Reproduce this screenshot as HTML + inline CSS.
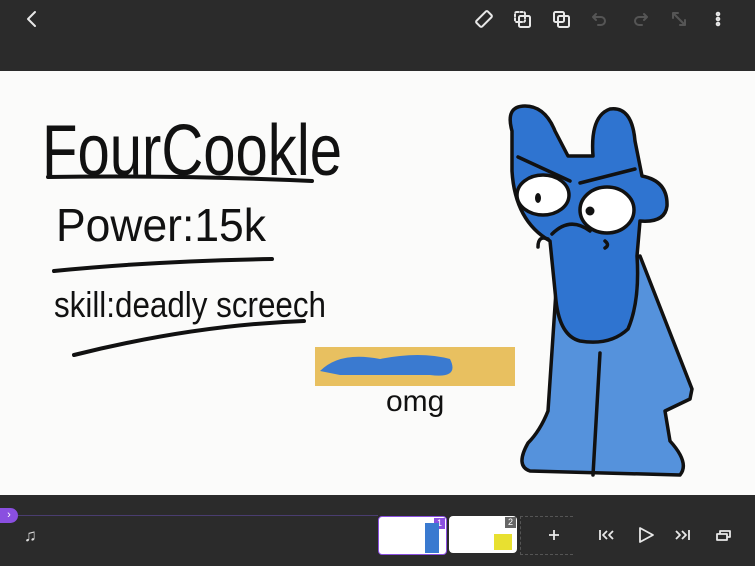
<!DOCTYPE html><html><head><style>
body{margin:0;width:755px;height:566px;background:#2b2b2b;overflow:hidden;font-family:"Liberation Sans",sans-serif;position:relative}
.top{position:absolute;top:0;left:0;width:755px;height:71px;background:#2b2b2b}
.canvas{position:absolute;top:71px;left:0;width:755px;height:424px;background:#fbfbfa}
svg{position:absolute}
</style></head><body>
<div class="top"></div>
<svg style="left:0;top:0" width="755" height="40" fill="none" stroke="#e8e8e8" stroke-width="2" stroke-linecap="round" stroke-linejoin="round">
<path d="M35 12l-7 7 7 7"/>
<rect x="476" y="15" width="16" height="8" rx="1.5" transform="rotate(-45 484 19)"/>
<rect x="515" y="12" width="10" height="10" rx="1.5" stroke-dasharray="2 2"/><rect x="519" y="16" width="11" height="11" rx="1.5"/>
<rect x="554" y="12" width="10" height="10" rx="1.5"/><rect x="558" y="16" width="11" height="11" rx="1.5"/>
<g stroke="#555"><path d="M596 14l-3 3 3 3M593 17h8a4 4 0 010 8h-3"/><path d="M644 14l3 3-3 3M647 17h-8a4 4 0 000 8h3"/><path d="M673 13l12 12M673 13v5M673 13h5M685 25h-5M685 25v-5"/></g>
<circle cx="718" cy="14" r="1.3"/><circle cx="718" cy="19" r="1.3"/><circle cx="718" cy="24" r="1.3"/>
</svg>
<div class="canvas"></div>
<svg style="left:0;top:71px" width="755" height="424">
<g font-family="Liberation Sans" fill="#111">
<text x="42" y="104" font-size="72" textLength="300" lengthAdjust="spacingAndGlyphs">FourCookle</text>
<text x="56" y="170" font-size="46" textLength="210" lengthAdjust="spacingAndGlyphs">Power:15k</text>
<text x="54" y="246" font-size="36" textLength="272" lengthAdjust="spacingAndGlyphs">skill:deadly screech</text>
<text x="386" y="340" font-size="30">omg</text>
</g>
<g stroke="#111" stroke-width="4" fill="none" stroke-linecap="round">
<path d="M48 106q130-2 264 4"/><path d="M54 200q100-10 218-12"/><path d="M74 284q120-30 230-34"/>
</g>
<rect x="315" y="276" width="200" height="39" fill="#e8c060"/>
<path d="M320 300q20-20 60-12q40-8 70 0q10 20-20 16h-90z" fill="#3a7ad0"/>
<g stroke="#111" stroke-width="3.5" stroke-linejoin="round" stroke-linecap="round">
<path d="M556 220 L548 340 Q540 360 528 372 Q515 395 530 400 L680 404 Q690 392 670 370 L665 340 L690 328 L692 318 L640 185 Z" fill="#5592dc"/>
<path d="M600 282 L593 404" fill="none"/>
<path d="M512 60 Q505 35 525 35 Q545 35 555 60 L568 85 L593 85 Q590 45 610 38 Q632 35 635 70 L642 105 Q668 110 667 135 Q665 152 640 150 L637 185 Q640 230 628 258 Q610 275 580 270 Q560 265 556 230 L550 170 Q515 150 512 100 Z" fill="#2f74d0"/>
<path d="M518 86 L570 110 M580 112 L635 98" fill="none"/>
<ellipse cx="543" cy="124" rx="26" ry="20" fill="#fff"/>
<ellipse cx="607" cy="139" rx="27" ry="23" fill="#fff"/>
<path d="M552 163 Q570 145 590 160 M605 170 q5 4 0 7 M548 168 q-10 -4 -10 8" fill="none"/>
</g>
<ellipse cx="538" cy="127" rx="3" ry="5" fill="#111"/><circle cx="590" cy="140" r="4.5" fill="#111"/>
</svg>
<div style="position:absolute;left:0;top:508px;width:18px;height:15px;background:#8a4fe0;border-radius:0 8px 8px 0;color:#fff;font-size:11px;line-height:15px;text-align:center">›</div>
<div style="position:absolute;left:18px;top:515px;width:360px;height:1px;background:#4a3d70"></div>
<div style="position:absolute;left:24px;top:526px;color:#ddd;font-size:17px">♫</div>
<div style="position:absolute;left:378px;top:516px;width:67px;height:37px;background:#fff;border:1px solid #8a4fe0;border-radius:4px"><div style="position:absolute;right:1px;top:1px;width:11px;height:11px;background:#8a4fe0;color:#fff;font-size:9px;text-align:center;line-height:11px">1</div><div style="position:absolute;left:46px;top:6px;width:14px;height:30px;background:#3a7ad0"></div></div>
<div style="position:absolute;left:449px;top:516px;width:68px;height:37px;background:#fff;border-radius:4px"><div style="position:absolute;right:1px;top:1px;width:11px;height:11px;background:#666;color:#fff;font-size:9px;text-align:center;line-height:11px">2</div><div style="position:absolute;left:45px;top:18px;width:18px;height:16px;background:#e8e030"></div></div>
<div style="position:absolute;left:520px;top:516px;width:52px;height:37px;border:1px dashed #555;border-right:none"></div>
<svg style="left:540px;top:520px" width="215" height="30" fill="none" stroke="#e8e8e8" stroke-width="1.8" stroke-linejoin="round">
<path d="M9 15h10M14 10v10"/>
<path d="M60 10v10M67 11l-4 4 4 4M73 11l-4 4 4 4"/>
<path d="M100 8l13 7-13 7z"/>
<path d="M136 11l4 4-4 4M142 11l4 4-4 4M149 10v10"/>
<path d="M177 14h10v6h-10zM180 14v-3h10v6h-3"/>
</svg>
</body></html>
